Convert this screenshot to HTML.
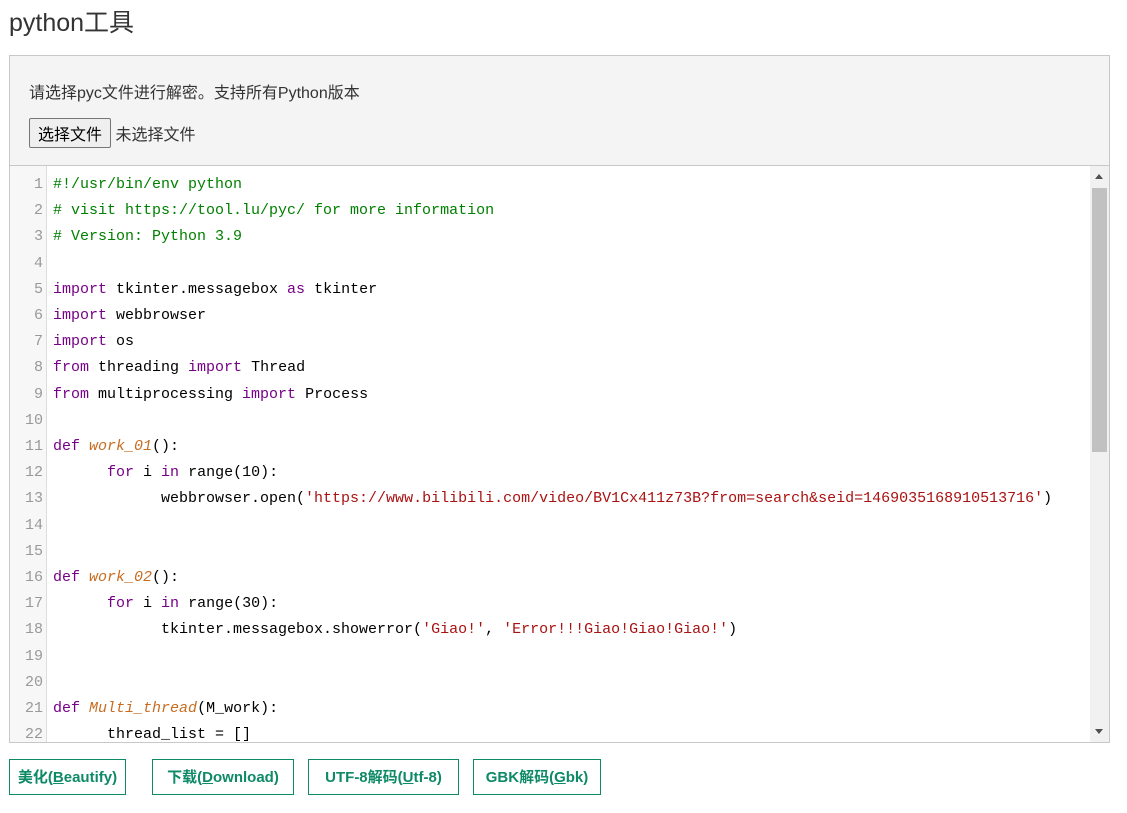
<!DOCTYPE html>
<html><head><meta charset="utf-8"><style>
body{margin:0;background:#fff;font-family:"Liberation Sans","Noto Sans CJK SC",sans-serif;}
h1{position:absolute;left:9px;top:3px;margin:0;font-size:25px;font-weight:normal;color:#333;}
.panel{position:absolute;left:9px;top:55px;width:1099px;height:686px;border:1px solid #c8c8c8;}
.top{height:109px;background:#f4f4f4;border-bottom:1px solid #c8c8c8;position:relative;font-size:16px;color:#333;}
.top .t{position:absolute;left:19px;top:23px;}
.top .f{position:absolute;left:19px;top:62px;}
.btnf{display:inline-block;border:1px solid #767676;background:#efefef;border-radius:2px;padding:2px 8px;font-size:16px;color:#000;}
.ed{position:relative;height:576px;overflow:hidden;background:#fff;}
.gut{position:absolute;left:0;top:0;width:36px;height:100%;background:#f7f7f7;border-right:1px solid #ddd;}
pre{margin:0;position:absolute;left:0;top:6px;font-family:"Liberation Mono","Noto Sans CJK SC",monospace;font-size:15px;line-height:26.2px;color:#000;}
.n{display:inline-block;width:33px;text-align:right;color:#999;margin-right:10px;}
.c{color:#008000}.k{color:#708}.fn{color:#c76d22;font-style:italic}.s{color:#a11}
.sb{position:absolute;right:0;top:0;width:19px;height:100%;background:#f1f1f1;}
.th{position:absolute;left:2px;top:22px;width:15px;height:264px;background:#c1c1c1;}
.up,.dn{position:absolute;left:5px;width:0;height:0;border-left:4px solid transparent;border-right:4px solid transparent;}
.up{top:8px;border-bottom:5px solid #505050;}
.dn{bottom:8px;border-top:5px solid #505050;}
.b{position:absolute;top:759px;height:36px;border:1px solid #0e8a66;color:#0e8a66;font-weight:bold;font-size:15px;line-height:35px;text-align:center;box-sizing:border-box;background:#fff;}
</style></head><body>
<h1>python工具</h1>
<div class="panel">
<div class="top"><div class="t">请选择pyc文件进行解密。支持所有Python版本</div>
<div class="f"><span class="btnf">选择文件</span> 未选择文件</div></div>
<div class="ed"><div class="gut"></div>
<pre><span class="n">1</span><span class="c">#!/usr/bin/env python</span>
<span class="n">2</span><span class="c"># visit https://tool.lu/pyc/ for more information</span>
<span class="n">3</span><span class="c"># Version: Python 3.9</span>
<span class="n">4</span>
<span class="n">5</span><span class="k">import</span> tkinter.messagebox <span class="k">as</span> tkinter
<span class="n">6</span><span class="k">import</span> webbrowser
<span class="n">7</span><span class="k">import</span> os
<span class="n">8</span><span class="k">from</span> threading <span class="k">import</span> Thread
<span class="n">9</span><span class="k">from</span> multiprocessing <span class="k">import</span> Process
<span class="n">10</span>
<span class="n">11</span><span class="k">def</span> <span class="fn">work_01</span>():
<span class="n">12</span>      <span class="k">for</span> i <span class="k">in</span> range(10):
<span class="n">13</span>            webbrowser.open(<span class="s">'https://www.bilibili.com/video/BV1Cx411z73B?from=search&amp;seid=1469035168910513716'</span>)
<span class="n">14</span>
<span class="n">15</span>
<span class="n">16</span><span class="k">def</span> <span class="fn">work_02</span>():
<span class="n">17</span>      <span class="k">for</span> i <span class="k">in</span> range(30):
<span class="n">18</span>            tkinter.messagebox.showerror(<span class="s">'Giao!'</span>, <span class="s">'Error!!!Giao!Giao!Giao!'</span>)
<span class="n">19</span>
<span class="n">20</span>
<span class="n">21</span><span class="k">def</span> <span class="fn">Multi_thread</span>(M_work):
<span class="n">22</span>      thread_list = []
</pre>
<div class="sb"><div class="up"></div><div class="th"></div><div class="dn"></div></div>
</div></div>
<div class="b" style="left:9px;width:117px">美化(<u>B</u>eautify)</div>
<div class="b" style="left:152px;width:142px">下载(<u>D</u>ownload)</div>
<div class="b" style="left:308px;width:151px">UTF-8解码(<u>U</u>tf-8)</div>
<div class="b" style="left:473px;width:128px">GBK解码(<u>G</u>bk)</div>
</body></html>
